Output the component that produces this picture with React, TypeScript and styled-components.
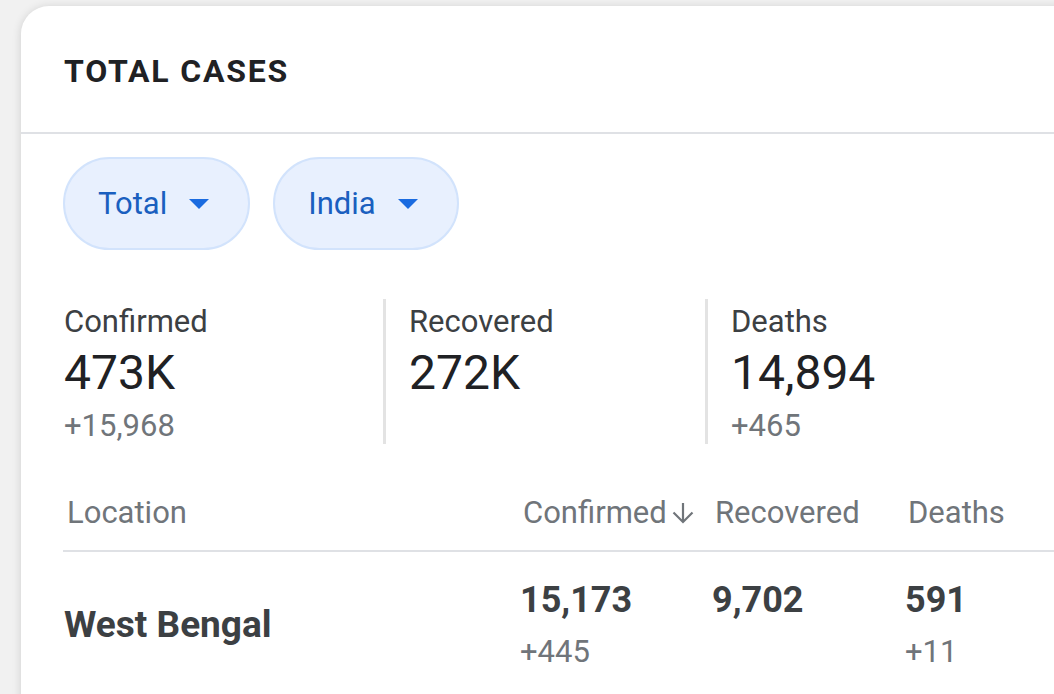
import React from 'react'
import styled, { createGlobalStyle } from 'styled-components'

const GlobalStyle = createGlobalStyle`
  html, body {
    margin: 0;
    padding: 0;
    background: #f1f1f1;
    overflow: hidden;
    font-family: Roboto, 'Liberation Sans', Arial, sans-serif;
  }
`

const Page = styled.div`
  width: 1054px;
  height: 694px;
  overflow: hidden;
  padding: 6px 0 0 21px;
  box-sizing: border-box;
`

const Card = styled.div`
  width: 1080px;
  height: 720px;
  background: #ffffff;
  border-radius: 28px;
  box-shadow: 0 1px 10px rgba(0, 0, 0, 0.14);
`

const CardHeader = styled.div`
  height: 128px;
  display: flex;
  align-items: center;
  padding-left: 43px;
  border-bottom: 2px solid #dfe1e5;
  box-sizing: border-box;
`

const Title = styled.h2`
  margin: 4px 0 0;
  font-size: 32px;
  font-weight: 700;
  letter-spacing: 1.8px;
  color: #202124;
`

const Body = styled.div`
  padding-left: 42px;
`

const ChipRow = styled.div`
  display: flex;
  gap: 23px;
  padding-top: 23px;
`

const Chip = styled.button`
  height: 93px;
  display: flex;
  align-items: center;
  gap: 22px;
  padding: 0 39px 0 33px;
  border: 2px solid #d2e3fc;
  border-radius: 47px;
  background: #e8f0fe;
  color: #1a5fbf;
  font-family: inherit;
  font-size: 31px;
  box-sizing: border-box;
`

const Caret = () => (
  <svg width="20" height="10" viewBox="0 0 20 10">
    <path d="M0 0h20L10 10z" fill="#1a6be0" />
  </svg>
)

const Stats = styled.div`
  display: grid;
  grid-template-columns: 320px 322px 1fr;
  margin-top: 49px;
`

const Stat = styled.div<{ $divided?: boolean }>`
  height: 145px;
  padding: 5px 0 0 ${({ $divided }) => ($divided ? '23px' : '1px')};
  border-left: ${({ $divided }) => ($divided ? '3px solid #e3e3e3' : 'none')};
  box-sizing: border-box;
`

const StatLabel = styled.div`
  font-size: 31px;
  line-height: 36px;
  color: #3c4043;
`

const StatValue = styled.div`
  margin-top: 5px;
  font-size: 48px;
  line-height: 56px;
  color: #202124;
`

const StatDelta = styled.div`
  margin-top: 7px;
  font-size: 31px;
  line-height: 36px;
  color: #70757a;
`

const Grid = styled.div`
  display: grid;
  grid-template-columns: 457px 192px 193px 1fr;
`

const HeadRow = styled(Grid)`
  margin-top: 51px;
  padding-bottom: 19px;
  border-bottom: 2px solid #dfe1e5;
`

const HeadCell = styled.div<{ $indent?: number }>`
  display: flex;
  align-items: center;
  padding-left: ${({ $indent }) => $indent ?? 3}px;
  font-size: 31px;
  line-height: 36px;
  color: #70757a;
`

const SortIcon = () => (
  <svg width="26" height="26" viewBox="0 0 26 26" style={{ marginLeft: 3 }}>
    <path d="M13 3v19M3.5 12.5 13 22l9.5-9.5" fill="none" stroke="#70757a" strokeWidth="2.2" />
  </svg>
)

const DataRow = styled(Grid)`
  align-items: center;
  padding-top: 26px;
`

const Place = styled.div`
  padding-left: 1px;
  font-size: 37px;
  font-weight: 700;
  color: #3c4043;
`

const Cell = styled.div`
  align-self: start;
`

const CellValue = styled.div`
  font-size: 36px;
  line-height: 44px;
  font-weight: 700;
  color: #3c4043;
`

const CellDelta = styled.div`
  margin-top: 11px;
  font-size: 31px;
  line-height: 38px;
  color: #70757a;
`

const stats = [
  { label: 'Confirmed', value: '473K', delta: '+15,968' },
  { label: 'Recovered', value: '272K', delta: '' },
  { label: 'Deaths', value: '14,894', delta: '+465' },
]

const row = {
  place: 'West Bengal',
  cells: [
    { value: '15,173', delta: '+445' },
    { value: '9,702', delta: '' },
    { value: '591', delta: '+11' },
  ],
}

const App = () => (
  <>
    <GlobalStyle />
    <Page>
      <Card>
        <CardHeader>
          <Title>TOTAL CASES</Title>
        </CardHeader>
        <Body>
          <ChipRow>
            <Chip>
              Total
              <Caret />
            </Chip>
            <Chip>
              India
              <Caret />
            </Chip>
          </ChipRow>

          <Stats>
            {stats.map((s, i) => (
              <Stat key={s.label} $divided={i > 0}>
                <StatLabel>{s.label}</StatLabel>
                <StatValue>{s.value}</StatValue>
                {s.delta && <StatDelta>{s.delta}</StatDelta>}
              </Stat>
            ))}
          </Stats>

          <HeadRow>
            <HeadCell $indent={4}>Location</HeadCell>
            <HeadCell>
              Confirmed
              <SortIcon />
            </HeadCell>
            <HeadCell $indent={3}>Recovered</HeadCell>
            <HeadCell $indent={3}>Deaths</HeadCell>
          </HeadRow>

          <DataRow>
            <Place>{row.place}</Place>
            {row.cells.map((c, i) => (
              <Cell key={i}>
                <CellValue>{c.value}</CellValue>
                {c.delta && <CellDelta>{c.delta}</CellDelta>}
              </Cell>
            ))}
          </DataRow>
        </Body>
      </Card>
    </Page>
  </>
)

export default App
